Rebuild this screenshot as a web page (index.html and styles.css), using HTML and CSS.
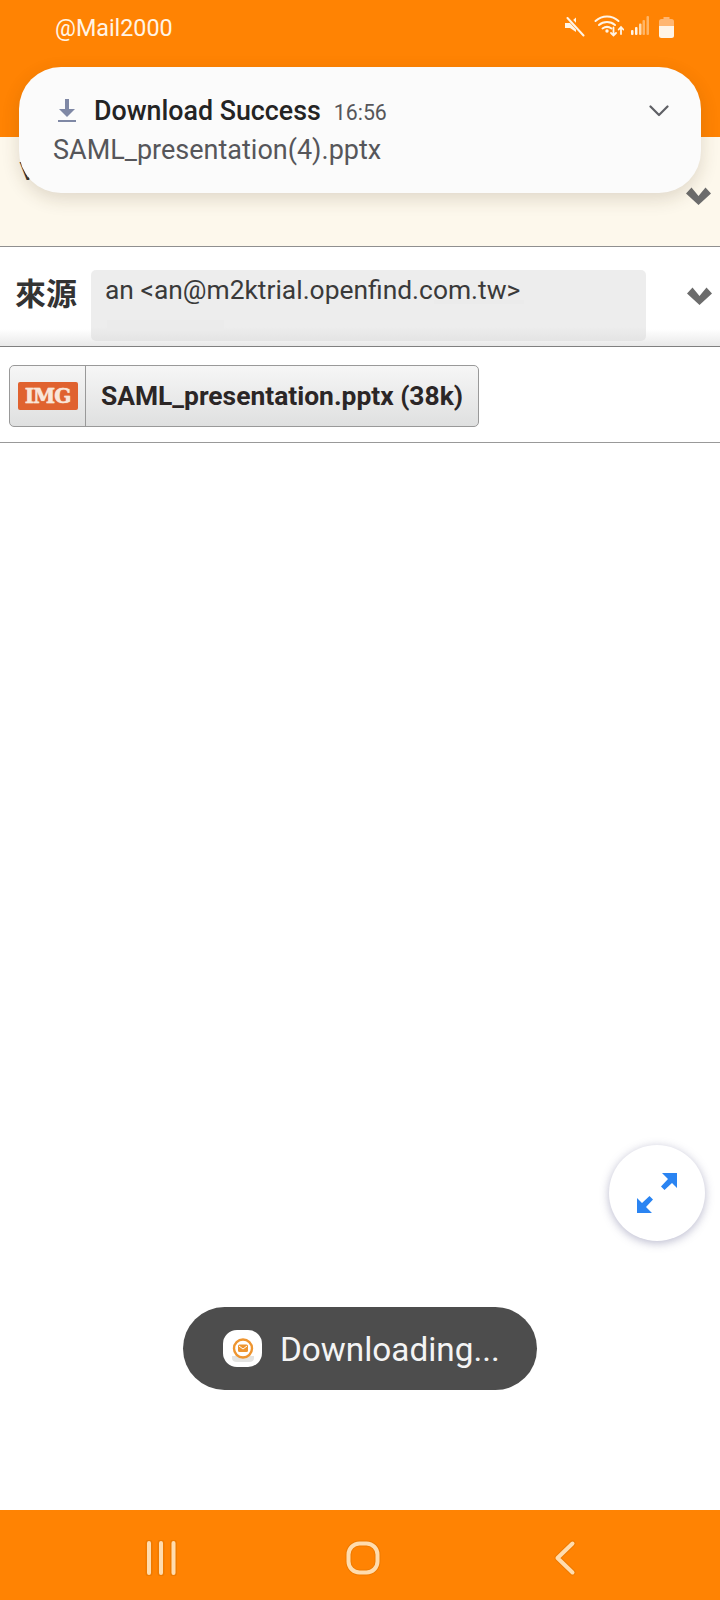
FILE: index.html
```html
<!DOCTYPE html>
<html lang="zh-Hant">
<head>
<meta charset="utf-8">
<title>Mail2000</title>
<link rel="stylesheet" href="styles.css">
</head>
<body>
<div class="page">
  <header class="status">
    <span class="status-name">@Mail2000</span>
    <div class="status-icons">
      <svg class="ic-mute" width="20" height="20" viewBox="0 0 20 20"><path d="M0 6h4.500L11 .5V15L5 11H0z" fill="#fff4e6"/><path d="M3 .5 20 19" stroke="#ff8303" stroke-width="4.500"/><path d="M2.500 1 18.500 18.500" stroke="#fff4e6" stroke-width="2" stroke-linecap="round"/></svg>
      <svg class="ic-wifi" width="30" height="22" viewBox="0 0 30 22" fill="none" stroke="#fff4e6" stroke-width="2" stroke-linecap="round"><path d="M1.500 6C8 0 18 0 24.500 6"/><path d="M5 10c4.500-4 11.500-4 16 0"/><path d="M8.500 13.500c2.800-2 6.200-2 9 0"/><circle cx="13" cy="16" r="1.700" fill="#fff4e6" stroke="none"/><path d="M19.500 12.500v8M17 18l2.500 2.500L22 18M27 19v-7M24.700 14.500l2.300-2.500 2.300 2.500" stroke-width="1.800"/></svg>
      <svg class="ic-signal" width="18" height="20" viewBox="0 0 18 20"><rect x="0" y="14" width="2.500" height="5" rx="1" fill="#fff4e6"/><rect x="4" y="11" width="2.500" height="8" rx="1" fill="#fff4e6"/><rect x="8" y="7.500" width="2.500" height="11.500" rx="1" fill="#ffd9ac"/><rect x="11.500" y="4" width="2.500" height="15" rx="1" fill="#ffb566"/><rect x="15.500" y="0" width="2.500" height="19" rx="1" fill="#ffb566"/></svg>
      <svg class="ic-batt" width="15" height="21" viewBox="0 0 15 21"><path d="M4.500 0h6v2H4.500z" fill="#ffb671"/><path d="M0 4.500Q0 2 2.500 2h10Q15 2 15 4.500V9H0z" fill="#ffb671"/><path d="M0 9h15v9.500Q15 21 12.500 21h-10Q0 21 0 18.500z" fill="#fff4e6"/></svg>
    </div>
  </header>

  <section class="row row-cream">
    <span class="cream-label">V</span>
    <svg class="chev" width="25" height="18" viewBox="0 0 25 18"><path d="M0 6.500 5.500 0.500l7 8.500 7-8.500L25 6.500 12.500 18z" fill="#6c6c6c"/></svg>
  </section>

  <section class="row row-from">
    <span class="row-label">來源</span>
    <div class="from-box">
      <span class="from-text">an &lt;an@m2ktrial.openfind.com.tw&gt;</span>
      <span class="smudge smudge-a"></span>
      <span class="smudge smudge-b"></span>
    </div>
    <svg class="chev" width="25" height="18" viewBox="0 0 25 18"><path d="M0 6.500 5.500 0.500l7 8.500 7-8.500L25 6.500 12.500 18z" fill="#6c6c6c"/></svg>
  </section>

  <section class="attach-row">
    <div class="attach">
      <span class="attach-icon"><span class="img-badge">IMG</span></span>
      <span class="attach-name">SAML_presentation.pptx (38k)</span>
    </div>
  </section>

  <main class="content"></main>

  <nav class="navbar">
    <svg width="34" height="36" viewBox="0 0 34 36" fill="none" stroke-linecap="round"><path d="M5 3v30M17 3v30M29.500 3v30" stroke="#ee7a00" stroke-width="7"/><path d="M5 3v30M17 3v30M29.500 3v30" stroke="#ffdcae" stroke-width="4"/></svg>
    <svg width="36" height="36" viewBox="0 0 36 36" fill="none"><rect x="3.500" y="3.500" width="29" height="29" rx="11" stroke="#ee7a00" stroke-width="6"/><rect x="3.500" y="3.500" width="29" height="29" rx="11" stroke="#ffdcae" stroke-width="4"/></svg>
    <svg width="24" height="36" viewBox="0 0 24 36" fill="none" stroke-linecap="round" stroke-linejoin="round"><path d="M18.500 3.500 3.500 18l15 14.500" stroke="#ee7a00" stroke-width="6"/><path d="M18.500 3.500 3.500 18l15 14.500" stroke="#ffdcae" stroke-width="4"/></svg>
  </nav>

  <aside class="notice">
    <div class="notice-head">
      <svg class="notice-dl" width="18" height="24" viewBox="0 0 18 24"><path d="M7 0h4v10h6l-8 8-8-8h6z" fill="#7f88a5"/><rect x="0" y="21" width="18" height="2" fill="#7f88a5"/></svg>
      <span class="notice-title">Download Success</span>
      <span class="notice-time">16:56</span>
      <svg class="notice-chev" width="20" height="12" viewBox="0 0 20 12" fill="none" stroke="#5f6065" stroke-width="2.200" stroke-linecap="round" stroke-linejoin="round"><path d="M1.500 1.500 10 10l8.500-8.500"/></svg>
    </div>
    <div class="notice-file">SAML_presentation(4).pptx</div>
  </aside>

  <button class="fab" type="button" aria-label="expand">
    <svg width="40" height="40" viewBox="0 0 40 40"><path d="M25 0H40V15L35 10 27.500 17 24 13.500 31 6z" fill="#2a84f2"/><path d="M15 40H0V25L5 30 12.500 23 16 26.500 9 34z" fill="#2a84f2"/></svg>
  </button>

  <div class="toast">
    <span class="toast-icon">
      <svg width="30" height="30" viewBox="0 0 30 30"><path d="M4 22h22v2q0 4-5 4H9q-5 0-5-4z" fill="#e4e4e2"/><circle cx="15" cy="14.500" r="9" fill="none" stroke="#ee9530" stroke-width="2.400"/><rect x="10" y="10.500" width="10" height="7.500" rx="1.500" fill="#ee9530"/><path d="m11 12 4 3 4-3" fill="none" stroke="#fff" stroke-width="1"/></svg>
    </span>
    <span class="toast-text">Downloading...</span>
  </div>
</div>
</body>
</html>
```

FILE: styles.css
```css
* { box-sizing: border-box; }
html, body { margin: 0; padding: 0; background: #fff; }
body { font-family: Roboto, "Noto Sans CJK TC", sans-serif; }

.page {
  position: relative;
  width: 720px;
  height: 1600px;
  overflow: hidden;
  display: flex;
  flex-direction: column;
  background: #fff;
}

.status {
  flex: none;
  height: 137px;
  background: #ff8303;
  padding: 14px 46px 0 55px;
  display: flex;
  justify-content: space-between;
  align-items: flex-start;
}
.status-name { color: #fff4e6; font-size: 23.300px; line-height: 28px; }
.status-icons { display: flex; align-items: flex-start; }
.ic-mute { margin-top: 3px; }
.ic-wifi { margin: 1px 0 0 9px; }
.ic-signal { margin: 2px 0 0 7px; }
.ic-batt { margin: 3px 0 0 10px; }

.row { flex: none; display: flex; align-items: flex-start; position: relative; }
.row-cream {
  height: 110px;
  background: #fdf8ec;
  border-bottom: 1px solid #8f8f8f;
  justify-content: space-between;
  padding: 50px 9px 0 19.500px;
}
.cream-label {
  margin-top: -31px;
  font: 400 25px/30px "Liberation Sans", sans-serif;
  color: #333;
}
.row-from {
  height: 100px;
  border-bottom: 1px solid #808080;
  background: linear-gradient(#fff 83%, #e9e9e9);
  padding: 23px 8px 0 15px;
}
.row-label {
  width: 76px;
  font: 700 31px/44px "Noto Sans CJK TC", sans-serif;
  color: #333;
}
.from-box {
  position: relative;
  width: 555px;
  height: 71px;
  margin-right: 41px;
  border-radius: 5px;
  background: linear-gradient(#ededed 80%, #e4e4e4);
  padding: 5px 14px;
}
.from-text { font: 400 26.400px/30px Roboto, sans-serif; color: #3a3a3a; }
.row-from .chev { margin-top: 17px; }
.smudge { position: absolute; background: #ebebeb; height: 4px; }
.smudge-a { left: 343px; top: 30px; width: 90px; }
.smudge-b { left: 16px; top: 50px; width: 117px; height: 11px; }

.attach-row {
  flex: none;
  height: 96px;
  padding: 18px 0 0 9px;
  border-bottom: 1px solid #999;
}
.attach {
  display: flex;
  width: 470px;
  height: 62px;
  border: 1px solid #999;
  border-radius: 5px;
  background: linear-gradient(#f6f6f6, #dfe0e0);
}
.attach-icon {
  flex: none;
  width: 76px;
  border-right: 1px solid #999;
  display: flex;
  align-items: center;
  justify-content: center;
}
.img-badge {
  width: 60px;
  height: 28px;
  background: #e0622f;
  border-radius: 2px;
  color: #f8e6da;
  font: 700 20px/28px "DejaVu Serif", serif;
  text-align: center;
  letter-spacing: -1px;
  text-shadow: 0 0 1px #f8e6da;
  -webkit-text-stroke: 0.3px #f8e6da;
}
.attach-name {
  padding-left: 15px;
  font: 700 26.400px/60px Roboto, sans-serif;
  color: #2b2626;
  white-space: nowrap;
}

.content { flex: 1; }

.navbar {
  flex: none;
  height: 90px;
  background: #ff8303;
  display: flex;
  align-items: flex-start;
  padding: 30px 0 0 144px;
}
.navbar svg:nth-child(2) { margin-left: 167px; }
.navbar svg:nth-child(3) { margin-left: 173px; }

.notice {
  position: absolute;
  left: 19px;
  top: 67px;
  width: 682px;
  height: 126px;
  padding: 29px 0 0 34px;
  background: #fbfbfb;
  border-radius: 42px;
  box-shadow: 0 6px 18px rgba(70, 50, 20, 0.16);
}
.notice-head { display: flex; align-items: center; height: 30px; position: relative; }
.notice-dl { margin: 0 0 0 5px; flex: none; }
.notice-title { margin-left: 18px; font-size: 26.800px; font-weight: 500; line-height: 30px; color: #242424; }
.notice-time { margin-left: 13px; font-size: 21.300px; line-height: 30px; color: #56565a; margin-top: 3px; }
.notice-chev { position: absolute; left: 596px; top: 9px; }
.notice-file { margin-top: 8px; font-size: 27px; line-height: 32px; color: #56565a; }

.fab {
  position: absolute;
  left: 609px;
  top: 1145px;
  width: 96px;
  height: 96px;
  padding: 0;
  border: 0;
  border-radius: 50%;
  background: #fff;
  box-shadow: 0 2px 10px rgba(80, 80, 130, 0.4);
  display: flex;
  align-items: center;
  justify-content: center;
}

.toast {
  position: absolute;
  left: 183px;
  top: 1307px;
  width: 354px;
  height: 83px;
  border-radius: 42px;
  background: #4d4d4d;
  display: flex;
  align-items: center;
  padding-left: 40px;
}
.toast-icon {
  width: 39px;
  height: 37px;
  background: #fff;
  border-radius: 14px;
  display: flex;
  align-items: center;
  justify-content: center;
}
.toast-text { margin-left: 18px; margin-top: 2px; font-size: 33.300px; color: #f4f4f4; line-height: 40px; }
```
